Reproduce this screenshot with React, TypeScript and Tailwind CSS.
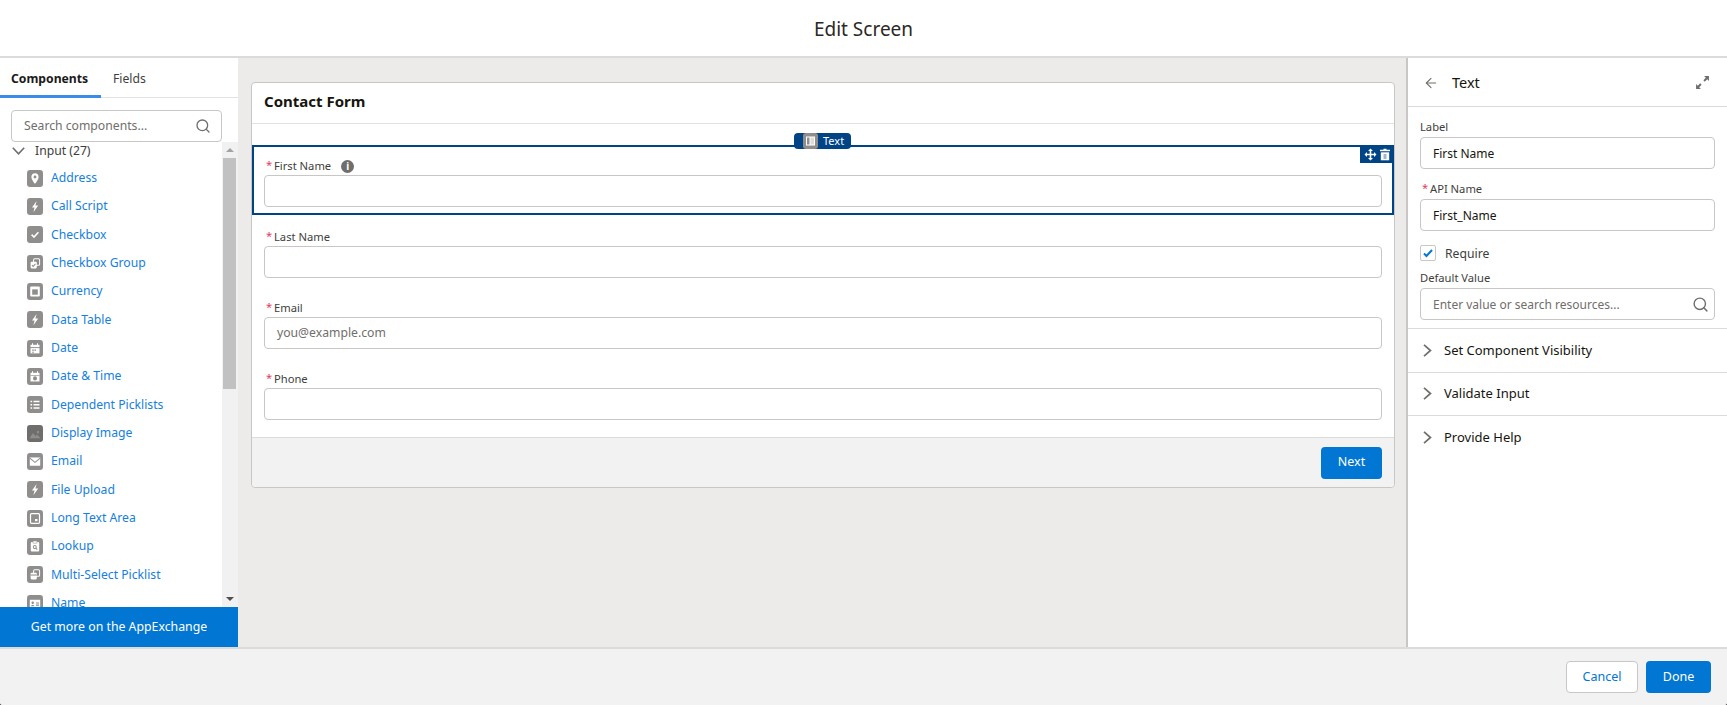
import { ArrowLeft, Search } from 'lucide-react';
import type { ReactNode } from 'react';

const FONT = 'font-["Noto_Sans",sans-serif]';
const BLUE = 'bg-[#0176d3]';

const glyphs: Record<string, ReactNode> = {
  pin: <path d="M8 3a3.6 3.6 0 0 0-3.6 3.6C4.4 9.2 8 13 8 13s3.6-3.8 3.6-6.4A3.6 3.6 0 0 0 8 3Zm0 5a1.4 1.4 0 1 1 0-2.8A1.4 1.4 0 0 1 8 8Z" fill="#fff" fillRule="evenodd" />,
  bolt: <path d="M9.6 2.8 5 9h2.6l-1.2 4.4L11.2 7H8.4l1.2-4.2Z" fill="#fff" />,
  check: <path d="m4.6 8.2 2.4 2.3 4.4-4.6" fill="none" stroke="#fff" strokeWidth="1.6" />,
  group: (
    <>
      <rect x="6.6" y="3.6" width="6" height="6" rx="1" fill="none" stroke="#fff" />
      <rect x="3.6" y="6.4" width="6.2" height="6.2" rx="1" fill="#fff" />
      <path d="m5 9.6 1.2 1.2L8.4 8.4" fill="none" stroke="#8f8e8c" />
    </>
  ),
  box: (
    <>
      <rect x="3.2" y="3.2" width="9.6" height="9.6" rx="1" fill="#fff" />
      <rect x="5.2" y="6" width="5.6" height="5" fill="#8f8e8c" />
    </>
  ),
  date: (
    <>
      <path d="M3.5 4.5h9v2.2h-9z" fill="#fff" />
      <path d="M3.5 7.6h9v5h-9z" fill="#fff" />
      <path d="M5.2 9h1.6v1.2H5.2zm2.2 0H9v1.2H7.4zm-2.2 2h1.6v1H5.2z" fill="#8f8e8c" />
      <path d="M5 3h1v2H5zm5 0h1v2h-1z" fill="#fff" />
    </>
  ),
  datetime: (
    <>
      <path d="M3.5 4.5h9v8.2h-9z" fill="#fff" />
      <path d="M5 3h1v2H5zm5 0h1v2h-1z" fill="#fff" />
      <path d="M3.5 6.6h9v.6h-9z" fill="#8f8e8c" />
      <circle cx="8" cy="9.8" r="2" fill="#8f8e8c" />
    </>
  ),
  list: <path d="M3.5 4.5h1.6v1.4H3.5zm3 0h6v1.4h-6zm-3 3h1.6v1.4H3.5zm3 0h6v1.4h-6zm-3 3h1.6v1.4H3.5zm3 0h6v1.4h-6z" fill="#fff" />,
  image: <path d="M2.5 12.500 6 7.500l2.500 3L10 9l3.500 3.500Zm8.500-7a1.200 1.200 0 1 1 0 2.400 1.200 1.200 0 0 1 0-2.400Z" fill="#8f8e8c" />,
  mail: (
    <>
      <rect x="2.8" y="4.2" width="10.4" height="7.8" fill="#fff" />
      <path d="m2.8 4.8 5.2 4 5.2-4" fill="none" stroke="#8f8e8c" />
    </>
  ),
  textarea: (
    <>
      <rect x="3.5" y="3.5" width="9" height="9" rx="1" fill="none" stroke="#fff" strokeWidth="1.2" />
      <rect x="8" y="8.5" width="2.5" height="2" fill="#fff" />
    </>
  ),
  lookup: (
    <>
      <rect x="3.8" y="3.8" width="8.4" height="9" rx="1" fill="#fff" />
      <rect x="6" y="2.8" width="4" height="2" fill="#fff" stroke="#8f8e8c" strokeWidth=".5" />
      <circle cx="7.8" cy="8.5" r="1.5" fill="none" stroke="#8f8e8c" />
      <path d="m9 9.7 1.2 1.3" stroke="#8f8e8c" />
    </>
  ),
  multi: (
    <>
      <rect x="6.6" y="3.6" width="6" height="6" rx="1" fill="none" stroke="#fff" />
      <rect x="3.6" y="6.4" width="6.2" height="6.2" rx="1" fill="#fff" />
      <path d="M3.6 8.5h6.2" stroke="#8f8e8c" />
    </>
  ),
  name: (
    <>
      <rect x="2.8" y="4.5" width="10.4" height="7.5" fill="#fff" />
      <circle cx="5.7" cy="7.4" r="1.2" fill="#8f8e8c" />
      <path d="M4 10.5c.2-1.5 3.2-1.5 3.4 0Zm5-3.5h3v1H9Zm0 2h3v1H9Z" fill="#8f8e8c" />
    </>
  ),
};

const items = [
  ['Address', 'pin'],
  ['Call Script', 'bolt'],
  ['Checkbox', 'check'],
  ['Checkbox Group', 'group'],
  ['Currency', 'box'],
  ['Data Table', 'bolt'],
  ['Date', 'date'],
  ['Date & Time', 'datetime'],
  ['Dependent Picklists', 'list'],
  ['Display Image', 'image'],
  ['Email', 'mail'],
  ['File Upload', 'bolt'],
  ['Long Text Area', 'textarea'],
  ['Lookup', 'lookup'],
  ['Multi-Select Picklist', 'multi'],
  ['Name', 'name'],
];

function ItemIcon({ kind }: { kind: string }) {
  const dark = kind === 'image';
  return (
    <svg width="16" height="17" viewBox="0 0 16 16" preserveAspectRatio="none" className="shrink-0">
      <rect width="16" height="16" rx="3" fill={dark ? '#6f6e6c' : '#8f8e8c'} />
      {glyphs[kind]}
    </svg>
  );
}

function Sidebar() {
  return (
    <aside className="w-[238px] shrink-0 flex flex-col bg-white">
      <div className="h-[40px] shrink-0 flex border-b border-[#e3e2e1] text-[12.2px]">
        <div className="w-[101px] h-[40px] border-b-[3px] border-[#3b8bea] pl-[11px] pt-[12px] font-bold text-[#1a1a1a]">Components</div>
        <div className="pl-[12px] pt-[12px] text-[#3e3e3c]">Fields</div>
      </div>
      <div className="h-[44px] shrink-0 pl-[11px] pr-[16px] pt-[12px]">
        <div className="h-[32px] rounded-[4px] border border-[#c9c7c5] flex items-center justify-between pl-[12px] pr-[10px] text-[12.2px] text-[#706e6b]">
          <span>Search components...</span>
          <Search size={16} strokeWidth={2} className="text-[#706e6b]" />
        </div>
      </div>
      <div className="flex-1 min-h-0 flex overflow-hidden">
        <div className="flex-1 min-w-0 overflow-hidden">
          <div className="h-[18px] flex items-center pl-[12px] gap-[10px] text-[12.2px] text-[#3e3e3c]">
            <svg width="13" height="8" viewBox="0 0 13 8" fill="none" stroke="#706e6b" strokeWidth="1.6">
              <path d="m.8.8 5.7 6 5.7-6" />
            </svg>
            <span>Input (27)</span>
          </div>
          <ul className="mt-[4px]">
            {items.map(([label, kind]) => (
              <li key={label} className="h-[28.35px] flex items-center pl-[27px] gap-[8px] text-[12.2px] text-[#1580de]">
                <ItemIcon kind={kind} />
                <span>{label}</span>
              </li>
            ))}
          </ul>
        </div>
        <div className="w-[16px] shrink-0 flex flex-col bg-[#f1f1f1] pl-[1px] pr-[2px]">
          <div className="h-[16px] flex items-center justify-center">
            <div className="w-0 h-0 border-x-[4px] border-x-transparent border-b-[4px] border-b-[#a3a3a3]" />
          </div>
          <div className="h-[231px] bg-[#c1c1c1]" />
          <div className="flex-1 flex items-end justify-center pb-[6px]">
            <div className="w-0 h-0 border-x-[4px] border-x-transparent border-t-[4px] border-t-[#505050]" />
          </div>
        </div>
      </div>
      <div className={`h-[40px] shrink-0 ${BLUE} flex items-center justify-center text-[12.3px] text-white`}>Get more on the AppExchange</div>
    </aside>
  );
}

function FormField({ label, placeholder, info }: { label: string; placeholder?: string; info?: boolean }) {
  return (
    <div className="h-[71px] px-[12px] pt-[12px]">
      <div className="h-[18px] flex items-center text-[11.2px] text-[#3e3e3c]">
        <span className="text-[#e0405e] w-[8px] ml-[2px] -mt-[2px]">*</span>
        <span>{label}</span>
        {info && (
          <span className="ml-[10px] w-[13px] h-[13px] rounded-full bg-[#706e6b] text-white text-[10px] font-bold leading-[13px] text-center">i</span>
        )}
      </div>
      <div className="h-[32px] rounded-[4px] border border-[#c9c7c5] bg-white flex items-center pl-[12px] text-[12.2px] text-[#706e6b]">{placeholder}</div>
    </div>
  );
}

function Canvas() {
  return (
    <main className="flex-1 min-w-0 bg-[#ecebea] pl-[13px] pr-[11px] pt-[24px]">
      <div className="h-[406px] rounded-[4px] border border-[#c9c7c5] bg-white flex flex-col">
        <div className="h-[41px] shrink-0 border-b border-[#e3e2e1] pl-[12px] pb-[4px] flex items-center text-[15px] font-bold text-[#16160f]">Contact Form</div>
        <div className="h-[21px] shrink-0" />
        <div className="relative h-[70px] shrink-0 border-[2px] border-[#014486] [&>div]:-mx-[2px] [&>div]:-mt-[2px]">
          <FormField label="First Name" info />
          <span className="absolute -top-[14px] left-[540px] h-[16px] w-[57px] rounded-[4px] bg-[#014486] flex items-center pl-[9px] gap-[5px] text-[11px] text-white">
            <svg width="15" height="16" viewBox="0 0 15 16" className="shrink-0">
              <rect width="15" height="16" rx="3" fill="#8f8e8c" />
              <rect x="3" y="3.5" width="9" height="9" fill="#fff" />
              <rect x="4" y="4.5" width="2.5" height="7" fill="#8f8e8c" />
              <rect x="7.5" y="4.5" width="3.5" height="7" fill="#dcdcdc" />
            </svg>
            Text
          </span>
          <span className="absolute -top-[2px] -right-[2px] h-[18px] w-[34px] bg-[#014486] flex items-center justify-center gap-[2px]">
            <svg width="13" height="13" viewBox="0 0 13 13" fill="#fff">
              <path d="M6.5.5 9 3H7.3v2.700H10V4l2.500 2.500L10 9V7.300H7.300V10H9l-2.500 2.500L4 10h1.700V7.300H3V9L.5 6.500 3 4v1.700h2.700V3H4Z" />
            </svg>
            <svg width="12" height="13" viewBox="0 0 12 13" fill="#fff">
              <path d="M4.500.8h3v1h3.500V3.300H1V1.800h3.500Z" />
              <path d="M1.800 4.300h8.400v8H1.800Z" />
              <path d="M4.500 6h3v5h-3Z" fill="#9fb8d2" />
            </svg>
          </span>
        </div>
        <div className="flex-1 min-h-0 mt-[1px]">
          <FormField label="Last Name" />
          <FormField label="Email" placeholder="you@example.com" />
          <FormField label="Phone" />
        </div>
        <div className="h-[50px] shrink-0 rounded-b-[4px] border-t border-[#dddbda] bg-[#f3f2f2] flex items-center justify-end pr-[12px]">
          <div className={`w-[61px] h-[32px] rounded-[4px] ${BLUE} flex items-center justify-center text-[12.5px] text-white`}>Next</div>
        </div>
      </div>
    </main>
  );
}

function PanelField({ label, value, required, search }: { label: string; value: string; required?: boolean; search?: boolean }) {
  return (
    <div className="mx-[12px]">
      <div className="h-[19px] flex items-center text-[11.2px] text-[#3e3e3c]">
        {required && <span className="text-[#e0405e] w-[8px] ml-[2px] -mt-[2px]">*</span>}
        <span>{label}</span>
      </div>
      <div className={`h-[32px] rounded-[4px] border border-[#c9c7c5] bg-white flex items-center justify-between pl-[12px] pr-[5px] text-[12px] ${search ? 'text-[#706e6b]' : 'text-[#16160f]'}`}>
        <span className="pt-[2px]">{value}</span>
        {search && <Search size={17} strokeWidth={2} className="text-[#706e6b]" />}
      </div>
    </div>
  );
}

function PanelSection({ label }: { label: string }) {
  return (
    <div className="h-[43.5px] border-b border-[#dddbda] flex items-center pl-[15px] gap-[12px] text-[13px] text-[#16160f] last:border-b-0">
      <svg width="9" height="13" viewBox="0 0 9 13" fill="none" stroke="#706e6b" strokeWidth="1.7">
        <path d="m1 .8 6.5 5.700L1 12.200" />
      </svg>
      <span>{label}</span>
    </div>
  );
}

function RightPanel() {
  return (
    <aside className="w-[321px] shrink-0 bg-white border-l-[2px] border-[#c9c7c5] flex flex-col">
      <div className="h-[49px] shrink-0 border-b border-[#dddbda] flex items-center pt-[1px] pl-[15px] pr-[17px] text-[14.5px] text-[#16160f]">
        <ArrowLeft size={16} strokeWidth={1.6} className="text-[#706e6b]" />
        <span className="ml-[13px]">Text</span>
        <svg width="15" height="15" viewBox="0 0 14 14" fill="#706e6b" className="ml-auto">
          <path d="M8.5 1H13v4.500l-1.600-1.600-2.300 2.300-1.300-1.300 2.300-2.300ZM5.500 13H1V8.500l1.600 1.600 2.300-2.300 1.300 1.300-2.300 2.300Z" />
        </svg>
      </div>
      <div className="pt-[11px] flex flex-col gap-[11px]">
        <PanelField label="Label" value="First Name" />
        <PanelField label="API Name" value="First_Name" required />
      </div>
      <div className="h-[44px] shrink-0 flex items-center mx-[12px] gap-[9px] text-[12.2px] text-[#3e3e3c]">
        <span className="w-[16px] h-[16px] rounded-[2px] border border-[#c9c7c5] flex items-center justify-center">
          <svg width="10" height="10" viewBox="0 0 10 10" fill="none" stroke="#0176d3" strokeWidth="2">
            <path d="m1 5.5 2.500 2.500L9 2" />
          </svg>
        </span>
        <span className="pt-[2px]">Require</span>
      </div>
      <div className="-mt-[6px]">
        <PanelField label="Default Value" value="Enter value or search resources..." search />
      </div>
      <div className="mt-[8px] border-t border-[#dddbda]">
        <PanelSection label="Set Component Visibility" />
        <PanelSection label="Validate Input" />
        <PanelSection label="Provide Help" />
      </div>
    </aside>
  );
}

export default function App() {
  return (
    <div className={`${FONT} w-[1727px] h-[705px] bg-[#4a4a4a] overflow-hidden`}>
      <div className="h-full rounded-b-[3px] overflow-hidden flex flex-col bg-white">
        <header className="h-[58px] shrink-0 bg-white border-b-[2px] border-[#dddbda] pt-[2px] flex items-center justify-center text-[19px] text-[#2b2826]">Edit Screen</header>
        <div className="flex-1 min-h-0 flex">
          <Sidebar />
          <Canvas />
          <RightPanel />
        </div>
        <footer className="h-[58px] shrink-0 bg-[#f3f2f2] border-t-[2px] border-[#dddbda] flex items-center justify-end gap-[8px] pr-[16px] text-[12.5px]">
          <div className="w-[72px] h-[32px] rounded-[4px] border border-[#c9c7c5] bg-white flex items-center justify-center text-[#0176d3]">Cancel</div>
          <div className={`w-[65px] h-[32px] rounded-[4px] ${BLUE} flex items-center justify-center text-white`}>Done</div>
        </footer>
      </div>
    </div>
  );
}
